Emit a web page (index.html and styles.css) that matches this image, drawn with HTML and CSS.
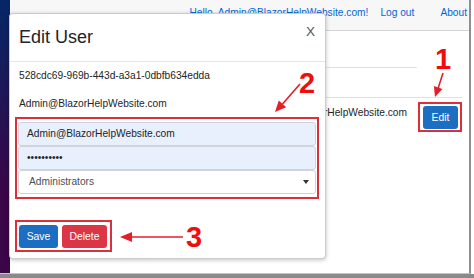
FILE: index.html
```html
<!DOCTYPE html>
<html>
<head>
<meta charset="utf-8">
<title>Edit User</title>
<link rel="stylesheet" href="styles.css">
</head>
<body>
<div class="screen">
  <div class="sidebar"></div>
  <div class="main">
    <div class="top-row">
      <a class="nav-link">Hello, Admin@BlazorHelpWebsite.com!</a>
      <a class="nav-link logout">Log out</a>
      <a class="nav-link about">About</a>
    </div>
    <div class="content">
      <div class="thead"></div>
      <div class="trow">
        <span class="cell">Admin@BlazorHelpWebsite.com</span>
        <div class="callout edit-callout"><button class="btn btn-primary btn-edit">Edit</button></div>
      </div>
    </div>
  </div>

  <div class="modal">
    <div class="modal-header">
      <div class="modal-title">Edit User</div>
      <div class="close">X</div>
    </div>
    <div class="modal-body">
      <div class="line">528cdc69-969b-443d-a3a1-0dbfb634edda</div>
      <div class="line">Admin@BlazorHelpWebsite.com</div>
      <div class="callout fields">
        <div class="input autofill">Admin@BlazorHelpWebsite.com</div>
        <div class="input autofill dots">••••••••••</div>
        <div class="input select"><span>Administrators</span><span class="caret"></span></div>
      </div>
      <div class="callout actions">
        <button class="btn btn-primary btn-save">Save</button>
        <button class="btn btn-danger btn-delete">Delete</button>
      </div>
    </div>
  </div>

  <svg class="annotations" width="469" height="273" viewBox="0 0 469 273">
    <g class="arrow">
      <line x1="443" y1="73" x2="438.2" y2="88"/>
      <polygon points="435,97 442.4,88.9 433.9,86.1"/>
      <line x1="300" y1="84" x2="282.5" y2="104"/>
      <polygon points="275,112 286.2,107.3 278.8,100.5"/>
      <line x1="183" y1="237" x2="131" y2="237"/>
      <polygon points="120,237 132,232 132,242"/>
    </g>
    <text class="num" x="443" y="69">1</text>
    <text class="num" x="307" y="93">2</text>
    <text class="num" x="194" y="247">3</text>
  </svg>
</div>
<div class="frame-bottom"></div>
</body>
</html>
```

FILE: styles.css
```css
* { box-sizing: border-box; }

html, body {
  margin: 0;
  padding: 0;
  background: #fff;
  font-family: "Liberation Sans", Arial, sans-serif;
  font-size: 10.2px;
  color: #212529;
}

.screen {
  position: relative;
  width: 471px;
  height: 274px;
  display: flex;
  overflow: hidden;
  border-right: 2px solid #8f8f8f;
  border-bottom: 1px solid #c4c4c4;
}

.sidebar {
  width: 10px;
  flex: none;
  background: linear-gradient(180deg, rgb(5, 39, 103) 0%, #3a0647 70%);
}

.main {
  flex: 1;
  display: flex;
  flex-direction: column;
}

.top-row {
  height: 31px;
  background: #f7f7f7;
  border-bottom: 1px solid #d6d5d5;
  display: flex;
  justify-content: flex-end;
  align-items: flex-start;
  padding: 6px 2px 0 0;
  line-height: 14px;
}

.nav-link {
  color: #0366d6;
  white-space: nowrap;
}
.logout { margin-left: 12px; }
.about { margin-left: 26px; }

.content {
  padding-left: 20px;
}

.thead {
  height: 37px;
  border-bottom: 1px solid #dee2e6;
  margin-right: 52px;
}

.trow {
  margin-top: 29px;
  margin-right: 7px;
  border-top: 1px solid #dee2e6;
  padding-top: 4px;
  display: flex;
  justify-content: flex-end;
  align-items: flex-start;
}

.cell {
  line-height: 14px;
  margin-top: 4px;
  margin-right: 11px;
  white-space: nowrap;
}

.callout {
  border: 2px solid #dc2f3b;
}

.edit-callout {
  display: flex;
  padding: 2px 2px 1px 3px;
}

.btn {
  border: none;
  border-radius: 3px;
  height: 23px;
  padding: 0 8px;
  font-family: "Liberation Sans", Arial, sans-serif;
  font-size: 10.4px;
  color: #fff;
  line-height: 23px;
}
.btn-primary { background: #1b6ec2; }
.btn-danger { background: #dc3545; }
.btn-edit { width: 35px; padding: 0; }
.btn-save { width: 39px; padding: 0; }
.btn-delete { width: 45px; padding: 0; }

.modal {
  position: absolute;
  left: 9px;
  top: 13px;
  width: 317px;
  height: 246px;
  background: #fff;
  border: 1px solid rgba(0, 0, 0, 0.2);
  border-radius: 4px;
  box-shadow: 0 1px 4px rgba(0, 0, 0, 0.25);
}

.modal-header {
  display: flex;
  justify-content: space-between;
  align-items: flex-start;
  padding: 12px 10px 13px 9px;
  border-bottom: 1px solid #e5e5e5;
}

.modal-title {
  font-size: 18px;
  line-height: 22px;
  color: #212529;
}

.close {
  font-size: 13.5px;
  line-height: 13px;
  margin-top: -1px;
  color: #555;
}

.modal-body {
  padding: 7px 9px 0 9px;
}

.line {
  line-height: 14px;
  margin-bottom: 14px;
  white-space: nowrap;
}
.line + .line { margin-bottom: 0; }

.fields {
  margin: 6px -3px 0 -4px;
  padding: 3px 1px;
  display: flex;
  flex-direction: column;
}

.input {
  height: 24px;
  border: 1px solid #ced4da;
  border-radius: 3px;
  padding: 0 8px;
  line-height: 22px;
  color: #212529;
  white-space: nowrap;
}
.autofill { background: #e8f0fe; }

.select {
  display: flex;
  justify-content: space-between;
  align-items: center;
  padding: 0 6px 0 10px;
  color: #495057;
  background: #fff;
}

.caret {
  width: 0;
  height: 0;
  border-left: 3px solid transparent;
  border-right: 3px solid transparent;
  border-top: 4px solid #333;
}

.actions {
  margin: 21px 0 0 -4px;
  width: 97px;
  padding: 3px 3px 2px 2px;
  display: flex;
  gap: 4px;
}

.annotations {
  position: absolute;
  left: 0;
  top: 0;
  pointer-events: none;
}

.arrow line {
  stroke: #e3202a;
  stroke-width: 1.6;
}
.arrow polygon {
  fill: #e3202a;
}

.num {
  font-family: "Liberation Sans", Arial, sans-serif;
  font-weight: bold;
  font-size: 29px;
  fill: #f20d0d;
  text-anchor: middle;
}

.frame-bottom {
  width: 474px;
  height: 4px;
  background: #8a8a8a;
}
```
